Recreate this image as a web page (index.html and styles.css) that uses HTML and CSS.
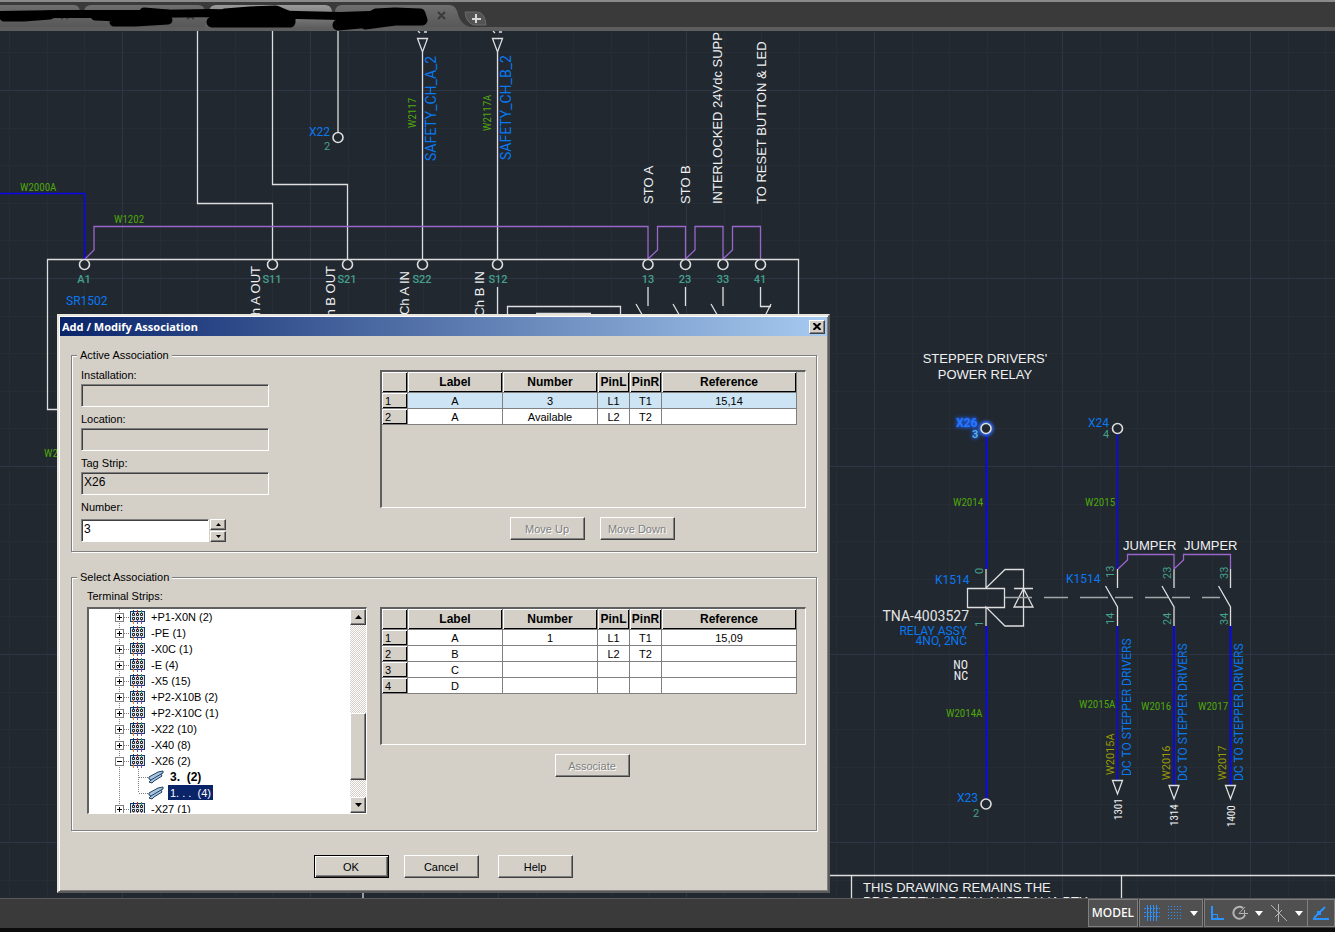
FILE: index.html
```html
<!DOCTYPE html>
<html lang="en">
<head>
    <meta charset="UTF-8">
    <meta name="viewport" content="width=device-width, initial-scale=1.0">
    <title>Add / Modify Association</title>
    <link rel="stylesheet" href="styles.css">
</head>
<body>
    <header class="tab-bar">
        <svg class="tabs" width="470" height="29" viewBox="0 0 470 29">
            <defs>
                <linearGradient id="tabFill" x1="0" y1="0" x2="0" y2="1">
                    <stop offset="0" stop-color="#6e6e6e"/>
                    <stop offset="1" stop-color="#585858"/>
                </linearGradient>
                <linearGradient id="tabActive" x1="0" y1="0" x2="0" y2="1">
                    <stop offset="0" stop-color="#9a9a9a"/>
                    <stop offset="1" stop-color="#606060"/>
                </linearGradient>
            </defs>
            <path fill="url(#tabFill)" d="M0 3H74Q79 3 80 9L84 25H0Z"/>
            <path fill="url(#tabFill)" d="M80 25L84 9Q85 3 91 3H198Q204 3 205 9L209 25Z"/>
            <path fill="url(#tabFill)" d="M330 25L335 9Q336 3 342 3H449Q455 3 457 9Q460 23 470 25Z"/>
            <path fill="url(#tabActive)" d="M205 25L209 9Q210 3 216 3H325Q331 3 332 9L336 25Z"/>
            <path fill="none" stroke="#3a3a3a" stroke-width="2" d="M61 11l7 6M68 11l-7 6M187 11l7 6M194 11l-7 6M438 10l7 7M445 10l-7 7"/>
            <path class="marker" stroke-width="8" d="M0 13L60 12L150 12L210 11L340 14L400 12"/>
            <path class="marker" stroke-width="9" d="M4 15L24 15L50 13M95 14L120 15M114 20L135 20L168 18M144 10L168 12"/>
            <path class="marker" stroke-width="11" d="M212 20L225 12L250 10L276 9L290 15L290 20L250 20L215 20M338 23L360 21L376 12L395 11L420 12L422 18L395 18L365 22M225 16L285 15M370 17L420 16"/>
        </svg>
        <button class="new-tab" type="button" aria-label="New tab">
            <svg width="24" height="16" viewBox="0 0 24 16">
                <path fill="#545454" stroke="#6a6a6a" d="M1 1H14Q21 2 22 14H10Q2 12 1 1Z"/>
                <path stroke="#d8d8d8" stroke-width="2" d="M12 3V12M8 8H17"/>
            </svg>
        </button>
    </header>

    <main class="canvas">
        <svg class="drawing" width="100%" height="100%">
            <defs>
                <pattern id="grid" x="122" y="90" width="188" height="188" patternUnits="userSpaceOnUse">
                    <path fill="none" stroke="#262d36" d="M38.5 0V188M75.5 0V188M113.5 0V188M150.5 0V188M0 38.5H188M0 75.5H188M0 113.5H188M0 150.5H188"/>
                    <path fill="none" stroke="#2e3646" d="M.5 0V188M0 .5H188"/>
                </pattern>
                <filter id="glow" x="-50%" y="-50%" width="200%" height="200%">
                    <feGaussianBlur stdDeviation="1.5"/>
                </filter>
            </defs>
            <!-- sheet coordinates start above the tab bar -->
            <g transform="translate(0 -31)">
                <rect width="100%" height="120%" fill="url(#grid)"/>

                <!-- control wiring -->
                <path class="wire-white" d="M197.5 31V203.5H272.5V259M272.5 31V184.5H347.5V259M338 31V132M422.5 52V259M497.5 52V259"/>
                <path class="wire-white" d="M417.5 38.5H427.5L422.5 52ZM492.5 38.5H502.5L497.5 52ZM418 31l2 2M424 32h3M493 31l2 2M499 32h3"/>
                <path class="wire-white" d="M58 409.5H47.5V259.5H798.5V320M497.5 287V320M507.5 320V306.5H620.5V320M536 313.5H591"/>
                <path class="wire-white" d="M648 287V306M636 304L644 318M685.5 287V306M673 304L681 318M723 287V306M711 304L719 318M760.5 287V306.5H771M771 304L764 318"/>
                <path class="wire-blue" d="M0 193.5H84.5V259"/>
                <path class="wire-purple" d="M85 259L94 250V226.5H648V259L657.5 250V226.5H685.5V259L695 250V226.5H723V259L732.5 250V226.5H760.5V259"/>
                <g class="terminal">
                    <circle cx="338" cy="137.500" r="5"/>
                    <circle cx="84.500" cy="264.500" r="5"/>
                    <circle cx="272.500" cy="264.500" r="5"/>
                    <circle cx="347.500" cy="264.500" r="5"/>
                    <circle cx="422.500" cy="264.500" r="5"/>
                    <circle cx="497.500" cy="264.500" r="5"/>
                    <circle cx="648" cy="264.500" r="5"/>
                    <circle cx="685.500" cy="264.500" r="5"/>
                    <circle cx="723" cy="264.500" r="5"/>
                    <circle cx="760.500" cy="264.500" r="5"/>
                </g>
                <g class="pin strong" text-anchor="middle">
                    <text x="84" y="283">A1</text>
                    <text x="272" y="283">S11</text>
                    <text x="347" y="283">S21</text>
                    <text x="422" y="283">S22</text>
                    <text x="498" y="283">S12</text>
                    <text x="648" y="283">13</text>
                    <text x="685" y="283">23</text>
                    <text x="723" y="283">33</text>
                    <text x="760" y="283">41</text>
                </g>
                <text class="pin" x="324" y="150">2</text>
                <text class="tag" x="309" y="136">X22</text>
                <text class="tag" x="66" y="305">SR1502</text>
                <text class="wire-no" x="20" y="191">W2000A</text>
                <text class="wire-no" x="114" y="223">W1202</text>
                <text class="wire-no" x="44" y="457">W2</text>
                <text class="wire-no" transform="translate(416 128) rotate(-90)">W2117</text>
                <text class="wire-no" transform="translate(491 131) rotate(-90)">W2117A</text>
                <text class="signal" transform="translate(436 161) rotate(-90)">SAFETY_CH_A_2</text>
                <text class="signal" transform="translate(511 160) rotate(-90)">SAFETY_CH_B_2</text>
                <g class="note">
                    <text transform="translate(260 266) rotate(-90)" text-anchor="end">Ch A OUT</text>
                    <text transform="translate(335 266) rotate(-90)" text-anchor="end">Ch B OUT</text>
                    <text transform="translate(409 271) rotate(-90)" text-anchor="end">Ch A IN</text>
                    <text transform="translate(484 271) rotate(-90)" text-anchor="end">Ch B IN</text>
                    <text transform="translate(653 204) rotate(-90)">STO A</text>
                    <text transform="translate(690 204) rotate(-90)">STO B</text>
                    <text transform="translate(722 204) rotate(-90)">INTERLOCKED 24Vdc SUPP</text>
                    <text transform="translate(766 204) rotate(-90)">TO RESET BUTTON &amp; LED</text>
                </g>

                <!-- power relay -->
                <g class="note">
                    <text x="985" y="363" text-anchor="middle">STEPPER DRIVERS'</text>
                    <text x="985" y="379" text-anchor="middle">POWER RELAY</text>
                    <text x="1123" y="550">JUMPER</text>
                    <text x="1184" y="550">JUMPER</text>
                </g>
                <path class="wire-blue heavy" d="M986.5 434V569M986.5 626V799M1174 626V785M1230.5 626V785"/>
                <path class="wire-blue" d="M1117.5 434V569M1117.5 626V780"/>
                <path class="wire-white" d="M986 569V588L1005 569.5H1023.500V626H1005L986 607V626M967.5 588.5H1004.5V607.5H967.5ZM1014 588.5H1033M1023.500 588.5L1014 607H1033Z"/>
                <path class="link" d="M1005 597.5H1032M1044 597.5H1068M1080 597.5H1108M1115 597.5H1133M1145 597.5H1168M1172 597.5H1190M1202 597.5H1220"/>
                <path class="wire-white" d="M1117.500 569V588M1105.500 586L1117.500 607V626M1174 569V588M1162 586L1174 607V626M1230.500 569V588M1218.500 586L1230.500 607V626"/>
                <path class="wire-white" d="M1112.500 780.500H1122.500L1117.500 794ZM1169 785.500H1179L1174 799ZM1225.500 785.500H1235.500L1230.500 799Z"/>
                <path class="wire-purple" d="M1118 569L1127.500 560V554.500H1174V569L1183.500 560V554.500H1230.500V569"/>
                <g class="terminal">
                    <circle cx="1117.500" cy="428.500" r="5"/>
                    <circle cx="986" cy="804" r="5"/>
                    <circle class="halo" cx="986" cy="428.500" r="5"/>
                    <circle cx="986" cy="428.500" r="5"/>
                </g>
                <text class="tag picked" x="956" y="427">X26</text>
                <text class="pin picked" x="972" y="438">3</text>
                <g class="pin">
                    <text x="1103" y="438">4</text>
                    <text x="973" y="817">2</text>
                    <text transform="translate(983 574) rotate(-90)">0</text>
                    <text transform="translate(983 627) rotate(-90)">1</text>
                    <text transform="translate(1114 578) rotate(-90)">13</text>
                    <text transform="translate(1114 625) rotate(-90)">14</text>
                    <text transform="translate(1171 579) rotate(-90)">23</text>
                    <text transform="translate(1171 625) rotate(-90)">24</text>
                    <text transform="translate(1228 579) rotate(-90)">33</text>
                    <text transform="translate(1228 625) rotate(-90)">34</text>
                </g>
                <g class="tag">
                    <text x="1088" y="427">X24</text>
                    <text x="957" y="802">X23</text>
                    <text x="935" y="584">K1514</text>
                    <text x="1066" y="583">K1514</text>
                    <text x="967" y="635" text-anchor="end">RELAY ASSY</text>
                    <text x="967" y="645" text-anchor="end">4NO, 2NC</text>
                    <text transform="translate(1131 776) rotate(-90)">DC TO STEPPER DRIVERS</text>
                    <text transform="translate(1187 781) rotate(-90)">DC TO STEPPER DRIVERS</text>
                    <text transform="translate(1243 781) rotate(-90)">DC TO STEPPER DRIVERS</text>
                </g>
                <g class="wire-no">
                    <text x="953" y="506">W2014</text>
                    <text x="1085" y="506">W2015</text>
                    <text x="946" y="717">W2014A</text>
                    <text x="1079" y="708">W2015A</text>
                    <text x="1141" y="710">W2016</text>
                    <text x="1198" y="710">W2017</text>
                </g>
                <g class="source">
                    <text transform="translate(1114 775) rotate(-90)">W2015A</text>
                    <text transform="translate(1170 780) rotate(-90)">W2016</text>
                    <text transform="translate(1226 780) rotate(-90)">W2017</text>
                </g>
                <text class="part" x="969" y="621" text-anchor="end">TNA-4003527</text>
                <g class="ref">
                    <text class="contact" x="968" y="669" text-anchor="end">NO</text>
                    <text class="contact" x="968" y="680" text-anchor="end">NC</text>
                    <text transform="translate(1122 820) rotate(-90)">1301</text>
                    <text transform="translate(1178 826) rotate(-90)">1314</text>
                    <text transform="translate(1235 827) rotate(-90)">1400</text>
                </g>

                <!-- title block -->
                <path class="wire-white" d="M363 885V900M830 875.500H3000M851.500 875V900M1121.500 875V900"/>
                <g class="note">
                    <text x="863" y="892">THIS DRAWING REMAINS THE</text>
                    <text x="863" y="906">PROPERTY OF TNA AUSTRALIA PTY</text>
                </g>
            </g>
        </svg>

        <form class="dialog" role="dialog" aria-labelledby="dialogTitle">
            <div class="title-bar">
                <h1 id="dialogTitle">Add / Modify Association</h1>
                <button class="close" type="button" aria-label="Close">
                    <svg width="8" height="7" viewBox="0 0 8 7"><path stroke="#000" stroke-width="2" d="M.5 0L7.500 7M7.500 0L.5 7"/></svg>
                </button>
            </div>
            <div class="dialog-body">
                <fieldset class="group">
                    <legend>Active Association</legend>
                    <div class="columns active-columns">
                        <div class="fields">
                            <label for="installation">Installation:</label>
                            <input class="box" type="text" id="installation" readonly>
                            <label for="location">Location:</label>
                            <input class="box" type="text" id="location" readonly>
                            <label for="tagStrip">Tag Strip:</label>
                            <input class="box" type="text" id="tagStrip" value="X26" readonly>
                            <label for="number">Number:</label>
                            <div class="spinner">
                                <input class="box" type="text" id="number" value="3">
                                <div class="spin-buttons">
                                    <button type="button" aria-label="Increase"><svg width="5" height="3"><path d="M0 3L2.500 0L5 3Z"/></svg></button>
                                    <button type="button" aria-label="Decrease"><svg width="5" height="3"><path d="M0 0L2.500 3L5 0Z"/></svg></button>
                                </div>
                            </div>
                        </div>
                        <div class="grid-side">
                            <div class="grid-box">
                                <table class="grid">
                                    <thead>
                                        <tr><th class="col-row"></th><th class="col-wide">Label</th><th class="col-wide">Number</th><th class="col-pin">PinL</th><th class="col-pin">PinR</th><th class="col-ref">Reference</th></tr>
                                    </thead>
                                    <tbody>
                                        <tr class="current"><th>1</th><td>A</td><td>3</td><td>L1</td><td>T1</td><td>15,14</td></tr>
                                        <tr><th>2</th><td>A</td><td>Available</td><td>L2</td><td>T2</td><td></td></tr>
                                    </tbody>
                                </table>
                            </div>
                            <div class="buttons">
                                <button class="btn" type="button" disabled>Move Up</button>
                                <button class="btn" type="button" disabled>Move Down</button>
                            </div>
                        </div>
                    </div>
                </fieldset>

                <fieldset class="group">
                    <legend>Select Association</legend>
                    <div class="columns select-columns">
                        <div class="strips">
                            <span class="caption" id="stripsLabel">Terminal Strips:</span>
                            <div class="tree-box">
                                <ul class="tree" role="tree" aria-labelledby="stripsLabel">
                                    <li><svg><use href="#node-plus"/></svg>+P1-X0N (2)</li>
                                    <li><svg><use href="#node-plus"/></svg>-PE (1)</li>
                                    <li><svg><use href="#node-plus"/></svg>-X0C (1)</li>
                                    <li><svg><use href="#node-plus"/></svg>-E (4)</li>
                                    <li><svg><use href="#node-plus"/></svg>-X5 (15)</li>
                                    <li><svg><use href="#node-plus"/></svg>+P2-X10B (2)</li>
                                    <li><svg><use href="#node-plus"/></svg>+P2-X10C (1)</li>
                                    <li><svg><use href="#node-plus"/></svg>-X22 (10)</li>
                                    <li><svg><use href="#node-plus"/></svg>-X40 (8)</li>
                                    <li><svg><use href="#node-minus"/></svg>-X26 (2)</li>
                                    <li class="leaf"><svg><use href="#leaf-mid"/></svg><b>3.&nbsp; (2)</b></li>
                                    <li class="leaf"><svg><use href="#leaf-end"/></svg><span class="selected">1. . .&nbsp; (4)</span></li>
                                    <li><svg><use href="#node-plus"/></svg>-X27 (1)</li>
                                </ul>
                                <div class="scrollbar">
                                    <button type="button" aria-label="Scroll up"><svg width="7" height="4"><path d="M0 4L3.500 0L7 4Z"/></svg></button>
                                    <div class="track"><div class="thumb"></div></div>
                                    <button type="button" aria-label="Scroll down"><svg width="7" height="4"><path d="M0 0L3.500 4L7 0Z"/></svg></button>
                                </div>
                            </div>
                        </div>
                        <div class="grid-side">
                            <div class="grid-box">
                                <table class="grid">
                                    <thead>
                                        <tr><th class="col-row"></th><th class="col-wide">Label</th><th class="col-wide">Number</th><th class="col-pin">PinL</th><th class="col-pin">PinR</th><th class="col-ref">Reference</th></tr>
                                    </thead>
                                    <tbody>
                                        <tr><th>1</th><td>A</td><td>1</td><td>L1</td><td>T1</td><td>15,09</td></tr>
                                        <tr><th>2</th><td>B</td><td></td><td>L2</td><td>T2</td><td></td></tr>
                                        <tr><th>3</th><td>C</td><td></td><td></td><td></td><td></td></tr>
                                        <tr><th>4</th><td>D</td><td></td><td></td><td></td><td></td></tr>
                                    </tbody>
                                </table>
                            </div>
                            <div class="buttons">
                                <button class="btn" type="button" disabled>Associate</button>
                            </div>
                        </div>
                    </div>
                </fieldset>

                <div class="dialog-buttons">
                    <button class="btn default" type="button">OK</button>
                    <button class="btn" type="button">Cancel</button>
                    <button class="btn help" type="button">Help</button>
                </div>
            </div>
        </form>
    </main>

    <footer class="status-bar">
        <button class="status-group model" type="button">MODEL</button>
        <div class="status-group">
            <button type="button" aria-label="Grid">
                <svg width="16" height="16"><path class="lit" d="M3.500 0V16M6.500 0V16M9.500 0V16M12.500 0V16"/><path class="lit" stroke-dasharray="2 1" d="M0 3.500H16M0 7.500H16M0 11.500H16"/></svg>
            </button>
            <button type="button" aria-label="Snap">
                <svg width="16" height="16"><path class="lit" stroke-dasharray="1 2" d="M1 1.500H15M1 4.500H15M1 7.500H15M1 10.500H15M1 13.500H15"/></svg>
            </button>
            <button type="button" aria-label="Snap options"><svg width="8" height="5"><path fill="#fff" d="M0 0H8L4 5Z"/></svg></button>
        </div>
        <div class="status-group">
            <button type="button" aria-label="Ortho">
                <svg width="16" height="16"><path class="lit" stroke-width="2" d="M3 1V14M2 14H15"/><path class="lit" d="M4 9.500H8.500V13"/></svg>
            </button>
            <button type="button" aria-label="Polar tracking">
                <svg width="16" height="16"><path class="dim" stroke-width="2" d="M11 3A6 6 0 1 0 13 10"/><path class="dim" d="M7 8.500H16M7 8.500L13 2M12.500 5V12"/></svg>
            </button>
            <button type="button" aria-label="Polar options"><svg width="8" height="5"><path fill="#fff" d="M0 0H8L4 5Z"/></svg></button>
            <button type="button" aria-label="Isometric">
                <svg width="18" height="18"><path class="dim" d="M1 1L17 17M8.500 0V18M5 13L12 6"/></svg>
            </button>
            <button type="button" aria-label="Isometric options"><svg width="8" height="5"><path fill="#fff" d="M0 0H8L4 5Z"/></svg></button>
        </div>
        <div class="status-group last">
            <button type="button" aria-label="Object snap tracking">
                <svg width="18" height="16"><path class="lit" stroke-width="2" d="M2 13L13 2M1 14H17"/><rect x="5" y="6" width="4" height="4" fill="#2a93ff"/></svg>
            </button>
        </div>
    </footer>

    <!-- tree icons -->
    <svg class="symbols" width="0" height="0">
        <symbol id="strip" viewBox="0 0 15 16">
            <rect x=".5" y="2.500" width="14" height="10" fill="#dde6ee" stroke="#123a6a"/>
            <path fill="#fff" stroke="#222" d="M2.500 4.500h2v2h-2zM6.500 4.500h2v2h-2zM10.500 4.500h2v2h-2zM2.500 8.500h2v2h-2zM6.500 8.500h2v2h-2zM10.500 8.500h2v2h-2z"/>
            <path stroke="#123a6a" d="M3.500 1V4"/>
            <path stroke="#e8791e" d="M3.500 11V15"/>
            <path stroke="#d02020" d="M7.500 1V4"/>
            <path stroke="#28a048" d="M11.500 1V4"/>
            <path stroke="#8048a0" d="M11.500 11V15M7.500 11V15"/>
        </symbol>
        <symbol id="rail" viewBox="0 0 16 16">
            <path fill="#a9c6de" stroke="#1c3f63" d="M1 8L10 3L15 2L15 4L13 5L14 7L6 12L4 14L1 13L3 11L1 10Z"/>
            <path fill="none" stroke="#1c3f63" d="M3 11L13 5"/>
        </symbol>
        <symbol id="node-plus" viewBox="0 0 36 16">
            <path class="dots" d="M4.500 0V16M9 8.500H15"/>
            <rect x=".5" y="4.500" width="8" height="8" fill="#fff" stroke="#808080"/>
            <path stroke="#000" d="M2 8.500H7M4.500 6V11"/>
            <use href="#strip" x="15" width="15" height="16"/>
        </symbol>
        <symbol id="node-minus" viewBox="0 0 36 16">
            <path class="dots" d="M4.500 0V16M9 8.500H15"/>
            <rect x=".5" y="4.500" width="8" height="8" fill="#fff" stroke="#808080"/>
            <path stroke="#000" d="M2 8.500H7"/>
            <use href="#strip" x="15" width="15" height="16"/>
        </symbol>
        <symbol id="leaf-mid" viewBox="0 0 53 16">
            <path class="dots" d="M4.500 0V16M23.500 0V16M24 8.500H33"/>
            <use href="#rail" x="33" width="16" height="16"/>
        </symbol>
        <symbol id="leaf-end" viewBox="0 0 53 16">
            <path class="dots" d="M4.500 0V16M23.500 0V8M24 8.500H33"/>
            <use href="#rail" x="33" width="16" height="16"/>
        </symbol>
    </svg>
</body>
</html>
```

FILE: styles.css
```css
* {
    box-sizing: border-box;
}

body {
    display: flex;
    flex-direction: column;
    height: 100vh;
    margin: 0;
    overflow: hidden;
    background-color: #0c0c0c;
    font-family: "Liberation Sans", Arial, sans-serif;
    font-size: 11px;
    line-height: 14px;
}

button,
input {
    margin: 0;
    font: inherit;
    color: #000;
}

/* Document tabs */
.tab-bar {
    display: flex;
    align-items: flex-end;
    height: 31px;
    border-top: 2px solid #8a8a8a;
    border-bottom: 4px solid #5d5d5d;
    background-color: #3a3a3a;
}

.tabs {
    display: block;
    flex: none;
    align-self: flex-start;
    margin-right: -6px;
}

.marker {
    fill: none;
    stroke: #000;
    stroke-linecap: round;
    stroke-linejoin: round;
}

.new-tab {
    display: flex;
    padding: 0;
    border: 0;
    background: none;
}

/* Drawing area */
.canvas {
    position: relative;
    flex: 1;
    min-height: 0;
    overflow: hidden;
    background-color: #212830;
}

.drawing {
    display: block;
}

.drawing text {
    white-space: pre;
}

.wire-white,
.wire-blue,
.wire-purple,
.link,
.terminal {
    fill: none;
    stroke: #dedede;
    stroke-width: 1.3;
}

.wire-blue {
    stroke: #0808e8;
    stroke-width: 1.6;
}

.heavy {
    stroke-width: 2;
}

.wire-purple {
    stroke: #9b66cc;
}

.link {
    stroke: #a4a6a8;
}

.terminal {
    fill: #212830;
    stroke-width: 1.6;
}

.note {
    fill: #f0f0f0;
    font-size: 13px;
}

.tag,
.signal,
.pin,
.source,
.part {
    fill: #0a78f0;
    font-family: Roboto, sans-serif;
    font-size: 12px;
}

.signal {
    font-size: 14px;
}

.part {
    fill: #e4e4e4;
    font-size: 14px;
}

.pin {
    fill: #46a08c;
    font-size: 11px;
}

.strong {
    font-weight: 500;
}

.source {
    fill: #9a9a0a;
    font-size: 11px;
}

.wire-no,
.ref {
    fill: #4fa60c;
    font-family: "Liberation Sans Narrow", "Roboto Condensed", Roboto, sans-serif;
    font-size: 11px;
}

.ref {
    fill: #f0f0f0;
}

.contact {
    font-size: 12px;
}

.picked {
    fill: #2878ff;
    filter: drop-shadow(0 0 1px #1c60f0) drop-shadow(0 0 2px #1c60f0);
    font-weight: bold;
}

.pin.picked {
    fill: #5ab0d8;
}

.halo {
    filter: url(#glow);
    stroke: #2f6dff;
    stroke-width: 5;
}

/* Dialog window */
.dialog {
    position: absolute;
    top: 283px;
    left: 57px;
    width: 773px;
    padding: 1px;
    border: 2px solid;
    border-color: #e8e5de #5a5a5a #5a5a5a #e8e5de;
    background-color: #d4d0c8;
    box-shadow: inset 1px 1px #fff, inset -1px -1px #808080;
}

.title-bar {
    display: flex;
    align-items: center;
    justify-content: space-between;
    height: 19px;
    padding: 0 2px;
    background: linear-gradient(to right, #0a246a, #a6caf0);
}

.title-bar h1 {
    margin: 0;
    color: #fff;
    font: bold 11px/16px "Noto Sans", sans-serif;
}

.close,
.spin-buttons button,
.scrollbar button,
.thumb,
.btn {
    display: flex;
    align-items: center;
    justify-content: center;
    padding: 0;
    border: 1px solid;
    border-color: #fff #404040 #404040 #fff;
    border-radius: 0;
    background-color: #d4d0c8;
    box-shadow: inset -1px -1px #808080;
}

.close {
    width: 16px;
    height: 14px;
}

.dialog-body {
    padding: 12px 10px 12px 11px;
}

.group {
    min-width: 0;
    margin: 0 0 18px;
    padding: 0 10px 9px 9px;
    border: 1px solid #808080;
    box-shadow: 1px 1px #fff, inset 1px 1px #fff;
}

.group legend {
    margin-left: -4px;
    padding: 0 3px;
    background-color: #d4d0c8;
}

.columns {
    display: flex;
}

.active-columns {
    gap: 111px;
    padding-top: 6px;
}

.fields {
    display: flex;
    flex-direction: column;
    flex: none;
    width: 188px;
}

.fields label {
    margin-bottom: 2px;
}

.box {
    width: 100%;
    height: 23px;
    margin-bottom: 5px;
    padding: 0 2px 3px;
    border: 1px solid;
    border-color: #808080 #fff #fff #808080;
    border-radius: 0;
    outline: 0;
    background-color: #d4d0c8;
    box-shadow: inset 1px 1px #404040;
    font-size: 12px;
}

.spinner {
    display: flex;
    gap: 1px;
    padding-top: 3px;
}

.spinner .box {
    width: 128px;
    margin: 0;
    background-color: #fff;
}

.spin-buttons {
    display: flex;
    flex-direction: column;
    gap: 1px;
}

.spin-buttons button {
    width: 16px;
    height: 11px;
}

.grid-side {
    flex: 1;
    padding-top: 2px;
}

.grid-box {
    height: 138px;
    border: 2px solid;
    border-color: #606060 #fff #fff #606060;
    border-right-width: 1px;
    border-bottom-width: 1px;
}

.grid {
    width: 415px;
    border-spacing: 0;
    table-layout: fixed;
}

.grid th,
.grid td {
    height: 16px;
    padding: 0;
    border: 0 solid #808080;
    border-width: 0 1px 1px 0;
    background-color: #fff;
    text-align: center;
}

.grid th {
    background-color: #d4d0c8;
    box-shadow: inset 1px 1px #fff, inset -1px -1px #000;
}

.grid thead th {
    height: 21px;
    font-size: 12px;
}

.grid tbody th {
    padding-left: 3px;
    font-weight: normal;
    text-align: left;
}

.grid .current td {
    background-color: #cce4f4;
}

.col-row {
    width: 26px;
}

.col-wide {
    width: 95px;
}

.col-pin {
    width: 32px;
}

.col-ref {
    width: 135px;
}

.buttons {
    display: flex;
    justify-content: center;
    gap: 15px;
    padding: 9px 2px 0 0;
}

.btn {
    width: 75px;
    height: 23px;
}

.btn:disabled {
    color: #808080;
    text-shadow: 1px 1px #fff;
}

.btn.default {
    outline: 1px solid #000;
    outline-offset: -1px;
    border-color: #000;
    box-shadow: inset 1px 1px #fff, inset -1px -1px #404040, inset -2px -2px #808080;
}

/* Terminal strip tree */
.select-columns {
    gap: 13px;
    padding: 5px 0 7px 6px;
}

.select-columns .grid-side {
    padding-top: 18px;
}

.strips {
    flex: none;
    width: 280px;
}

.caption {
    display: block;
    margin-bottom: 4px;
}

.tree-box {
    display: flex;
    height: 207px;
    border: 2px solid;
    border-color: #606060 #fff #fff #606060;
    border-right-width: 1px;
    border-bottom-width: 1px;
    background-color: #fff;
}

.tree {
    flex: 1;
    margin: 0;
    padding: 0 0 0 26px;
    overflow: hidden;
    list-style: none;
}

.tree li {
    display: flex;
    height: 16px;
    line-height: 16px;
}

.tree svg {
    flex: none;
    width: 36px;
    height: 16px;
}

.tree .leaf svg {
    width: 53px;
}

.leaf b,
.selected {
    height: 15px;
    padding: 0 2px;
}

.leaf b {
    font-size: 12px;
}

.selected {
    background-color: #0a246a;
    color: #fff;
}

.dots {
    fill: none;
    stroke: #808080;
    stroke-dasharray: 1 1;
}

.scrollbar {
    display: flex;
    flex-direction: column;
    width: 16px;
    background: repeating-conic-gradient(#fff 0 25%, #d4d0c8 0 50%) 0 0 / 2px 2px;
}

.scrollbar button {
    height: 16px;
}

.track {
    flex: 1;
    padding-top: 88px;
}

.thumb {
    height: 67px;
}

.dialog-buttons {
    display: flex;
    justify-content: center;
    gap: 15px;
    padding: 6px 2px 0 0;
}

.help {
    margin-left: 4px;
}

/* Status bar */
.status-bar {
    display: flex;
    justify-content: flex-end;
    gap: 1px;
    height: 34px;
    padding-bottom: 1px;
    border-top: 1px solid #5a5a5a;
    border-bottom: 4px solid #0c0c0c;
    background-color: #3a3a3a;
}

.status-group {
    display: flex;
    align-items: center;
    gap: 7px;
    height: 28px;
    padding: 0 4px;
    border: 1px solid #808080;
    background-color: #505050;
}

.status-group button {
    display: flex;
    padding: 0;
    border: 0;
    background: none;
}

.model {
    padding: 0 3px;
    color: #fff;
    font: 500 12px/16px "Noto Sans", sans-serif;
}

.last {
    margin-left: -2px;
}

.lit {
    fill: none;
    stroke: #2a93ff;
}

.dim {
    fill: none;
    stroke: #b4b4b4;
}

.symbols {
    position: absolute;
}
```
